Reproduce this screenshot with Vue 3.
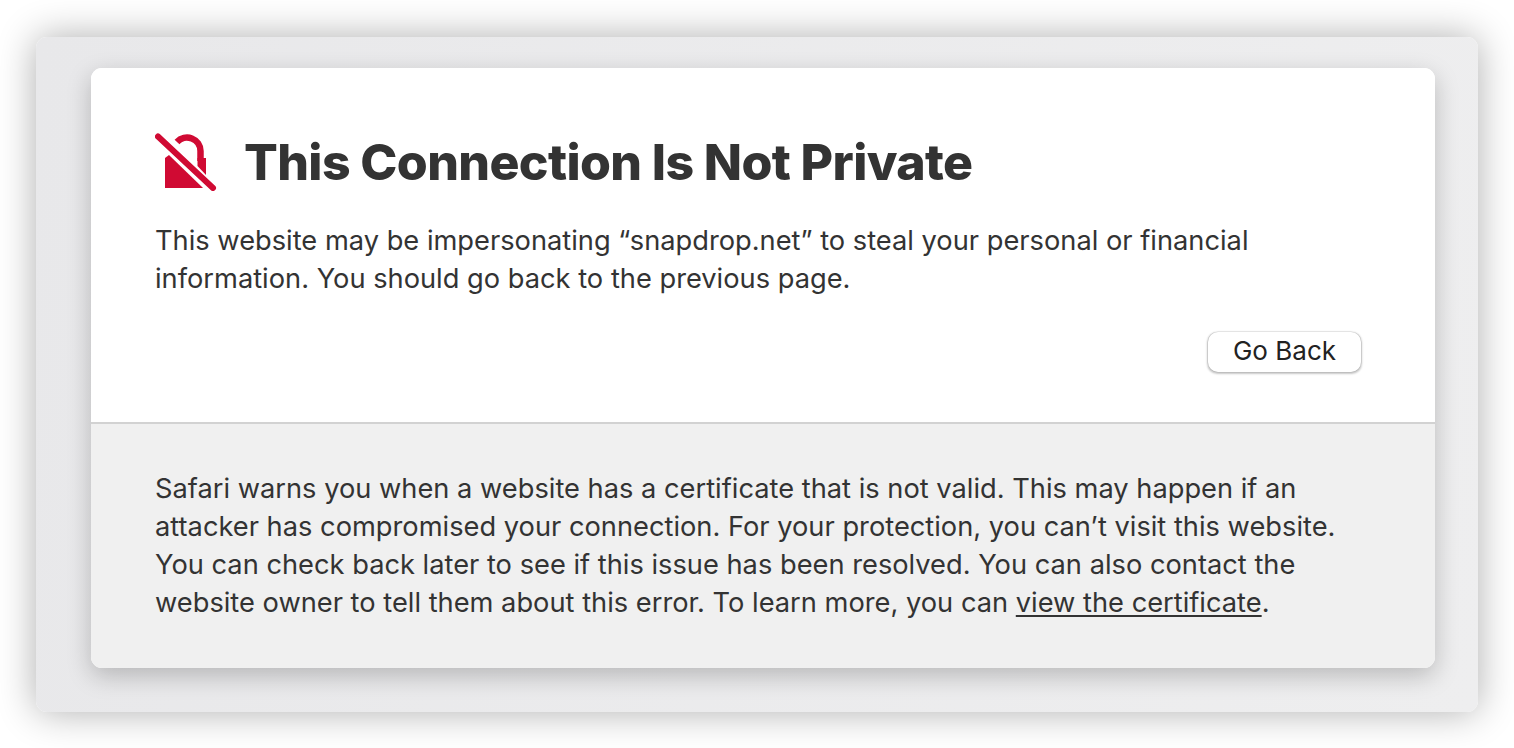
<template>
  <div class="page">
    <div class="window">
      <div class="card">
        <section class="top">
          <div class="head">
            <svg class="lock" viewBox="0 0 62 58" aria-hidden="true">
              <path d="M10 25 L14 22 L48 55 L10 55 Z" fill="#d00a33" />
              <path d="M22 9 A13.5 13.5 0 0 1 45.5 18 V28" fill="none" stroke="#d00a33" stroke-width="6.5" />
              <path d="M42.5 25 H51 V42 L42.5 33 Z" fill="#d00a33" />
              <path d="M3 3.5 L58 55" fill="none" stroke="#d00a33" stroke-width="6" stroke-linecap="round" />
            </svg>
            <h1 class="title">This Connection Is Not Private</h1>
          </div>
          <p class="text">This website may be impersonating “snapdrop.net” to steal your personal or financial information. You should go back to the previous page.</p>
          <div class="actions">
            <button class="back" type="button">Go Back</button>
          </div>
        </section>
        <section class="bottom">
          <p class="text">Safari warns you when a website has a certificate that is not valid. This may happen if an attacker has compromised your connection. For your protection, you can’t visit this website. You can check back later to see if this issue has been resolved. You can also contact the website owner to tell them about this error. To learn more, you can <a class="link" href="#">view the certificate</a>.</p>
        </section>
      </div>
    </div>
  </div>
</template>

<script setup>
</script>

<style scoped>
.page {
  width: 1514px;
  height: 748px;
  box-sizing: border-box;
  padding: 37px 36px 36px;
  background: #fff;
  overflow: hidden;
  font-family: Inter, "Liberation Sans", sans-serif;
  color: #333;
}

.window {
  height: 675px;
  box-sizing: border-box;
  padding: 31px 43px 44px 55px;
  border-radius: 11px;
  background: linear-gradient(100deg, #e8e8ea, #eeeeef);
  box-shadow: 0 0 38px rgba(0, 0, 0, 0.32);
}

.card {
  height: 600px;
  border-radius: 11px;
  overflow: hidden;
  background: #fff;
  box-shadow: 0 8px 24px rgba(0, 0, 0, 0.22);
}

.top {
  height: 354px;
  box-sizing: border-box;
  padding: 65px 74px 0 64px;
  background: #fff;
}

.head {
  display: flex;
  align-items: center;
  gap: 27px;
  height: 58px;
  margin-bottom: 31px;
}

.lock {
  width: 62px;
  height: 58px;
  flex: none;
}

.title {
  margin: 0;
  font-size: 50px;
  font-weight: 800;
  line-height: 56px;
  letter-spacing: -0.62px;
  color: #333;
  white-space: nowrap;
}

.text {
  margin: 0;
  width: 1200px;
  font-size: 27.26px;
  line-height: 38px;
  color: #333;
}

.actions {
  display: flex;
  justify-content: flex-end;
  margin-top: 34px;
}

.back {
  width: 153px;
  height: 40px;
  padding: 0 0 3px;
  border: 0;
  border-radius: 10px;
  background: #fff;
  box-shadow: 0 0 0 0.5px rgba(0, 0, 0, 0.1), 0 1px 2px 0.5px rgba(0, 0, 0, 0.22);
  font-family: inherit;
  font-size: 26px;
  color: #222;
}

.bottom {
  height: 246px;
  box-sizing: border-box;
  padding: 46px 64px 0;
  border-top: 2px solid #d2d2d2;
  background: #f0f0f0;
}

.link {
  color: inherit;
  text-decoration: underline;
  text-decoration-thickness: 1.5px;
  text-underline-offset: 3px;
}
</style>
